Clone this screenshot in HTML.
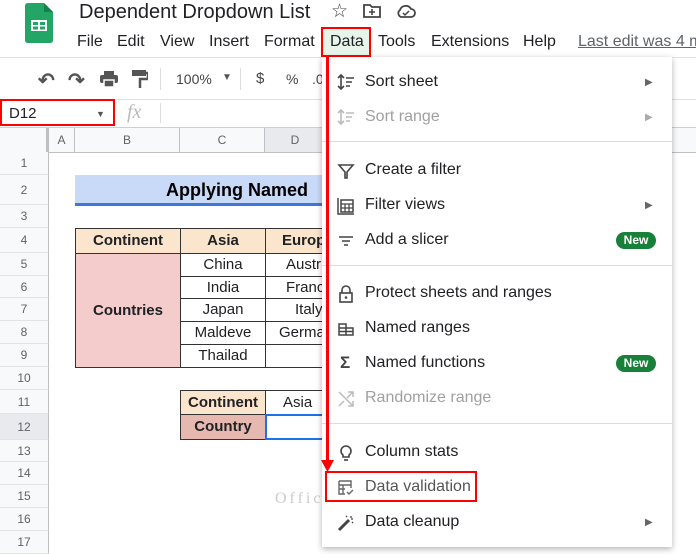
<!DOCTYPE html><html><head><style>
body{margin:0;width:696px;height:540px;overflow:hidden;background:#fff;font-family:"Liberation Sans",Arial,sans-serif;position:relative;color:#202124}
.a{position:absolute;white-space:nowrap}
.rn{position:absolute;left:0;width:49px;text-align:center;font-size:12px;color:#5f6368;background:#f8f9fa;border-bottom:1px solid #e2e3e3;border-right:1px solid #c0c0c0;box-sizing:border-box}
.c{position:absolute;box-sizing:border-box;text-align:center;font-size:15px;border:1px solid #333;white-space:nowrap;overflow:hidden}
.mi{position:absolute;left:365px;font-size:16px;color:#202124;margin-top:2px;white-space:nowrap}
.dis{color:#a0a0a0}
.ic{position:absolute;left:337px;width:18px;height:18px;margin-top:2px}
.arr{position:absolute;left:645px;font-size:10px;color:#666;margin-top:2px}
.new{position:absolute;left:616px;width:40px;height:17px;border-radius:9px;background:#188038;color:#fff;font-weight:bold;font-size:12px;text-align:center;line-height:17px;margin-top:1px}
.sep{position:absolute;left:322px;width:350px;height:1px;background:#dadce0}
.m{position:absolute;top:33px;font-size:16px;white-space:nowrap}
</style></head><body>
<svg class="a" style="left:25px;top:3px" width="28" height="40" viewBox="0 0 28 40"><path d="M3 0H19L28 9V37Q28 40 25 40H3Q0 40 0 37V3Q0 0 3 0Z" fill="#23a566"/><path d="M19 0V9H28Z" fill="#16804a"/><rect x="6" y="17" width="16" height="11" fill="#fff"/><rect x="8" y="19" width="5" height="3" fill="#23a566"/><rect x="15" y="19" width="5" height="3" fill="#23a566"/><rect x="8" y="23.5" width="5" height="3" fill="#23a566"/><rect x="15" y="23.5" width="5" height="3" fill="#23a566"/></svg>
<div class="a" style="left:79px;top:1px;font-size:20px;color:#202124">Dependent Dropdown List</div>
<div class="a" style="left:331px;top:0px;font-size:19px;color:#444">☆</div>
<svg class="a" style="left:363px;top:4px" width="18" height="14"><path d="M1 1H7L9 3H17V13H1Z" fill="none" stroke="#444" stroke-width="1.8"/><path d="M9 5V11M6 8H12" stroke="#444" stroke-width="1.6"/></svg>
<svg class="a" style="left:396px;top:4px" width="20" height="14"><path d="M5 13H15A4 4 0 0 0 15 5A6 6 0 0 0 4 6A4 4 0 0 0 5 13Z" fill="none" stroke="#444" stroke-width="1.8"/><path d="M7 9L9 11L13 7" fill="none" stroke="#444" stroke-width="1.5"/></svg>
<div class="m" style="left:77px">File</div>
<div class="m" style="left:117px">Edit</div>
<div class="m" style="left:160px">View</div>
<div class="m" style="left:209px">Insert</div>
<div class="m" style="left:264px">Format</div>
<div class="a" style="left:321px;top:27px;width:46px;height:26px;border:2.5px solid #f00;background:#e6f4ea;box-sizing:content-box"></div>
<div class="m" style="left:330px">Data</div>
<div class="m" style="left:378px">Tools</div>
<div class="m" style="left:431px">Extensions</div>
<div class="m" style="left:523px">Help</div>
<div class="m" style="left:578px;color:#5f6368;text-decoration:underline">Last edit was 4 m</div>
<div class="a" style="left:0;top:57px;width:696px;height:1px;background:#e0e0e0"></div>
<div class="a" style="left:38px;top:68px;font-size:20px;color:#555;font-weight:bold">↶</div>
<div class="a" style="left:68px;top:68px;font-size:20px;color:#555;font-weight:bold">↷</div>
<svg class="a" style="left:100px;top:71px" width="18" height="16"><rect x="4" y="0" width="10" height="4" fill="#555"/><rect x="0" y="4" width="18" height="8" rx="2" fill="#555"/><rect x="4" y="9" width="10" height="7" fill="#555" stroke="#fff" stroke-width="1.5"/></svg>
<svg class="a" style="left:132px;top:70px" width="16" height="18"><rect x="0" y="0" width="14" height="6" fill="#555"/><path d="M14 3H16V9H8V18" fill="none" stroke="#555" stroke-width="2.5"/></svg>
<div class="a" style="left:160px;top:68px;width:1px;height:22px;background:#ddd"></div>
<div class="a" style="left:176px;top:71px;font-size:14px;color:#444">100%</div>
<div class="a" style="left:222px;top:72px;font-size:10px;color:#555">▼</div>
<div class="a" style="left:240px;top:68px;width:1px;height:22px;background:#ddd"></div>
<div class="a" style="left:256px;top:70px;font-size:15px;color:#444">$</div>
<div class="a" style="left:286px;top:71px;font-size:14px;color:#444">%</div>
<div class="a" style="left:312px;top:71px;font-size:14px;color:#444">.0</div>
<div class="a" style="left:0;top:99px;width:696px;height:1px;background:#e0e0e0"></div>
<div class="a" style="left:0;top:99px;width:111px;height:23px;border:2.5px solid #f00;box-sizing:content-box"></div>
<div class="a" style="left:9px;top:105px;font-size:15px">D12</div>
<div class="a" style="left:96px;top:109px;font-size:9px;color:#555">▼</div>
<div class="a" style="left:127px;top:101px;font-size:20px;font-style:italic;color:#bbb;font-family:'Liberation Serif',serif">fx</div>
<div class="a" style="left:160px;top:103px;width:1px;height:20px;background:#ddd"></div>
<div class="a" style="left:0;top:127px;width:696px;height:1px;background:#d0d0d0"></div>
<div class="a" style="left:0;top:128px;width:696px;height:24px;background:#f8f9fa;border-bottom:1px solid #c0c0c0"></div>
<div class="a" style="left:0;top:128px;width:49px;height:24px;border-right:3px solid #c0c0c0;box-sizing:border-box"></div>
<div class="a" style="left:265px;top:128px;width:60px;height:24px;background:#e8eaed"></div>
<div class="a" style="left:49px;top:128px;width:26px;height:24px;border-right:1px solid #c0c0c0;text-align:center;line-height:24px;font-size:12px;color:#5f6368;box-sizing:border-box">A</div>
<div class="a" style="left:75px;top:128px;width:105px;height:24px;border-right:1px solid #c0c0c0;text-align:center;line-height:24px;font-size:12px;color:#5f6368;box-sizing:border-box">B</div>
<div class="a" style="left:180px;top:128px;width:85px;height:24px;border-right:1px solid #c0c0c0;text-align:center;line-height:24px;font-size:12px;color:#5f6368;box-sizing:border-box">C</div>
<div class="a" style="left:265px;top:128px;width:60px;height:24px;text-align:center;line-height:24px;font-size:12px;color:#5f6368">D</div>
<div class="rn" style="top:152px;height:23px;line-height:23px">1</div>
<div class="rn" style="top:175px;height:30px;line-height:30px">2</div>
<div class="rn" style="top:205px;height:23px;line-height:23px">3</div>
<div class="rn" style="top:228px;height:25px;line-height:25px">4</div>
<div class="rn" style="top:253px;height:23px;line-height:23px">5</div>
<div class="rn" style="top:276px;height:22px;line-height:22px">6</div>
<div class="rn" style="top:298px;height:23px;line-height:23px">7</div>
<div class="rn" style="top:321px;height:23px;line-height:23px">8</div>
<div class="rn" style="top:344px;height:23px;line-height:23px">9</div>
<div class="rn" style="top:367px;height:23px;line-height:23px">10</div>
<div class="rn" style="top:390px;height:24px;line-height:24px">11</div>
<div class="rn" style="top:414px;height:26px;line-height:26px;background:#e8eaed">12</div>
<div class="rn" style="top:440px;height:22px;line-height:22px">13</div>
<div class="rn" style="top:462px;height:23px;line-height:23px">14</div>
<div class="rn" style="top:485px;height:23px;line-height:23px">15</div>
<div class="rn" style="top:508px;height:23px;line-height:23px">16</div>
<div class="rn" style="top:531px;height:23px;line-height:23px">17</div>
<div class="a" style="left:75px;top:175px;width:250px;height:28px;background:#c9daf8;border-bottom:3px solid #3c78d8"></div>
<div class="a" style="left:166px;top:180px;font-size:18px;font-weight:bold;color:#000">Applying Named</div>
<div class="c" style="left:75px;top:228px;width:106px;height:26px;background:#fce5cd;font-weight:bold;line-height:24px">Continent</div>
<div class="c" style="left:180px;top:228px;width:86px;height:26px;background:#fce5cd;font-weight:bold;line-height:24px">Asia</div>
<div class="c" style="left:265px;top:228px;width:70px;height:26px;background:#fce5cd;font-weight:bold;line-height:24px;text-align:left;padding-left:16px">Europ</div>
<div class="c" style="left:75px;top:253px;width:106px;height:115px;background:#f4cccc;font-weight:bold;line-height:113px">Countries</div>
<div class="c" style="left:180px;top:253px;width:86px;height:24px;line-height:22px">China</div>
<div class="c" style="left:180px;top:276px;width:86px;height:23px;line-height:21px">India</div>
<div class="c" style="left:180px;top:298px;width:86px;height:24px;line-height:22px">Japan</div>
<div class="c" style="left:180px;top:321px;width:86px;height:24px;line-height:22px">Maldeve</div>
<div class="c" style="left:180px;top:344px;width:86px;height:24px;line-height:22px">Thailad</div>
<div class="c" style="left:265px;top:253px;width:70px;height:24px;line-height:22px;text-align:left;padding-left:20px">Austri</div>
<div class="c" style="left:265px;top:276px;width:70px;height:23px;line-height:21px;text-align:left;padding-left:20px">Franc</div>
<div class="c" style="left:265px;top:298px;width:70px;height:24px;line-height:22px;text-align:left;padding-left:29px">Italy</div>
<div class="c" style="left:265px;top:321px;width:70px;height:24px;line-height:22px;text-align:left;padding-left:13px">Germa</div>
<div class="c" style="left:265px;top:344px;width:70px;height:24px"></div>
<div class="c" style="left:180px;top:390px;width:86px;height:25px;background:#fce5cd;font-weight:bold;line-height:23px">Continent</div>
<div class="c" style="left:265px;top:390px;width:70px;height:25px;line-height:23px;text-align:left;padding-left:18px;border-left:0">Asia</div>
<div class="c" style="left:180px;top:414px;width:86px;height:26px;background:#e6b8af;font-weight:bold;line-height:24px">Country</div>
<div class="c" style="left:265px;top:414px;width:70px;height:26px;border:2px solid #1a73e8"></div>
<div class="a" style="left:275px;top:490px;font-size:16px;letter-spacing:3px;color:#ccc;font-family:'Liberation Serif',serif">OfficeWheel</div>
<div class="a" style="left:322px;top:57px;width:350px;height:490px;background:#fff;box-shadow:0 2px 6px rgba(0,0,0,.3)"></div>
<svg class="ic" style="top:71px" viewBox="0 0 18 18"><path d="M4 2V16M1 5L4 2L7 5M1 13L4 16L7 13" fill="none" stroke="#444" stroke-width="1.6"/><path d="M9 5H17M9 9H15M9 13H13" stroke="#444" stroke-width="1.6"/></svg>
<div class="mi" style="top:71px">Sort sheet</div><div class="arr" style="top:75px">▶</div>
<svg class="ic" style="top:106px" viewBox="0 0 18 18"><path d="M4 2V16M1 5L4 2L7 5M1 13L4 16L7 13" fill="none" stroke="#bbb" stroke-width="1.6"/><path d="M9 5H17M9 9H15M9 13H13" stroke="#bbb" stroke-width="1.6"/></svg>
<div class="mi dis" style="top:106px">Sort range</div><div class="arr" style="top:110px;color:#aaa">▶</div>
<div class="sep" style="top:141px"></div>
<svg class="ic" style="top:160px" viewBox="0 0 18 18"><path d="M2 3H16L10 10V16H8V10Z" fill="none" stroke="#444" stroke-width="1.6"/></svg>
<div class="mi" style="top:159px">Create a filter</div>
<svg class="ic" style="top:195px" viewBox="0 0 18 18"><path d="M1 1V17H17" fill="none" stroke="#444" stroke-width="1.5"/><rect x="4" y="3" width="12" height="12" fill="none" stroke="#444" stroke-width="1.5"/><path d="M4 7H16M4 11H16M8 7V15M12 7V15" stroke="#444" stroke-width="1.2"/></svg>
<div class="mi" style="top:194px">Filter views</div><div class="arr" style="top:198px">▶</div>
<svg class="ic" style="top:230px" viewBox="0 0 18 18"><path d="M2 5H16M5 9H13M7 13H11" stroke="#444" stroke-width="1.6"/></svg>
<div class="mi" style="top:229px">Add a slicer</div><div class="new" style="top:231px">New</div>
<div class="sep" style="top:265px"></div>
<svg class="ic" style="top:283px" viewBox="0 0 18 18"><path d="M5 8V5A4 4 0 0 1 13 5V8" fill="none" stroke="#444" stroke-width="1.6"/><rect x="3" y="8" width="12" height="9" fill="none" stroke="#444" stroke-width="1.6"/><circle cx="9" cy="12.5" r="1.3" fill="#444"/></svg>
<div class="mi" style="top:282px">Protect sheets and ranges</div>
<svg class="ic" style="top:318px" viewBox="0 0 18 18"><path d="M2 4H9V15H2ZM9 8H16V15H9ZM2 8H9M2 11.5H16" fill="none" stroke="#444" stroke-width="1.5"/></svg>
<div class="mi" style="top:317px">Named ranges</div>
<div class="a" style="left:340px;top:353px;font-size:17px;font-weight:bold;color:#444">Σ</div>
<div class="mi" style="top:352px">Named functions</div><div class="new" style="top:354px">New</div>
<svg class="ic" style="top:388px" viewBox="0 0 18 18"><path d="M2 2L16 16M11 16H16V11M2 16L7 11M11 2H16V7M16 2L10 8" fill="none" stroke="#bbb" stroke-width="1.5"/></svg>
<div class="mi dis" style="top:387px">Randomize range</div>
<div class="sep" style="top:423px"></div>
<svg class="ic" style="top:441px" viewBox="0 0 18 18"><path d="M6 12A5 5 0 1 1 12 12V14H6Z" fill="none" stroke="#444" stroke-width="1.6"/><path d="M7 17H11" stroke="#444" stroke-width="1.6"/></svg>
<div class="mi" style="top:441px">Column stats</div>
<svg class="ic" style="top:477px" viewBox="0 0 18 18"><path d="M2 2H14V9M2 2V15H8M2 6H14M6 6V15M2 10H8M10 13L12 15L16 11" fill="none" stroke="#666" stroke-width="1.4"/></svg>
<div class="mi" style="top:476px;color:#555">Data validation</div>
<svg class="ic" style="top:512px" viewBox="0 0 18 18"><path d="M2 16L12 6" stroke="#444" stroke-width="3"/><path d="M14 2V4M16 5H14M9 2L10 3M16 9L15 8" stroke="#444" stroke-width="1.3"/></svg>
<div class="mi" style="top:511px">Data cleanup</div><div class="arr" style="top:515px">▶</div>
<div class="a" style="left:326px;top:55px;width:3px;height:407px;background:#f00"></div>
<svg class="a" style="left:321px;top:460px" width="13" height="12"><path d="M0 0H13L6.5 12Z" fill="#f00"/></svg>
<div class="a" style="left:325px;top:471px;width:148px;height:27px;border:2.5px solid #f00;box-sizing:content-box"></div>
</body></html>
